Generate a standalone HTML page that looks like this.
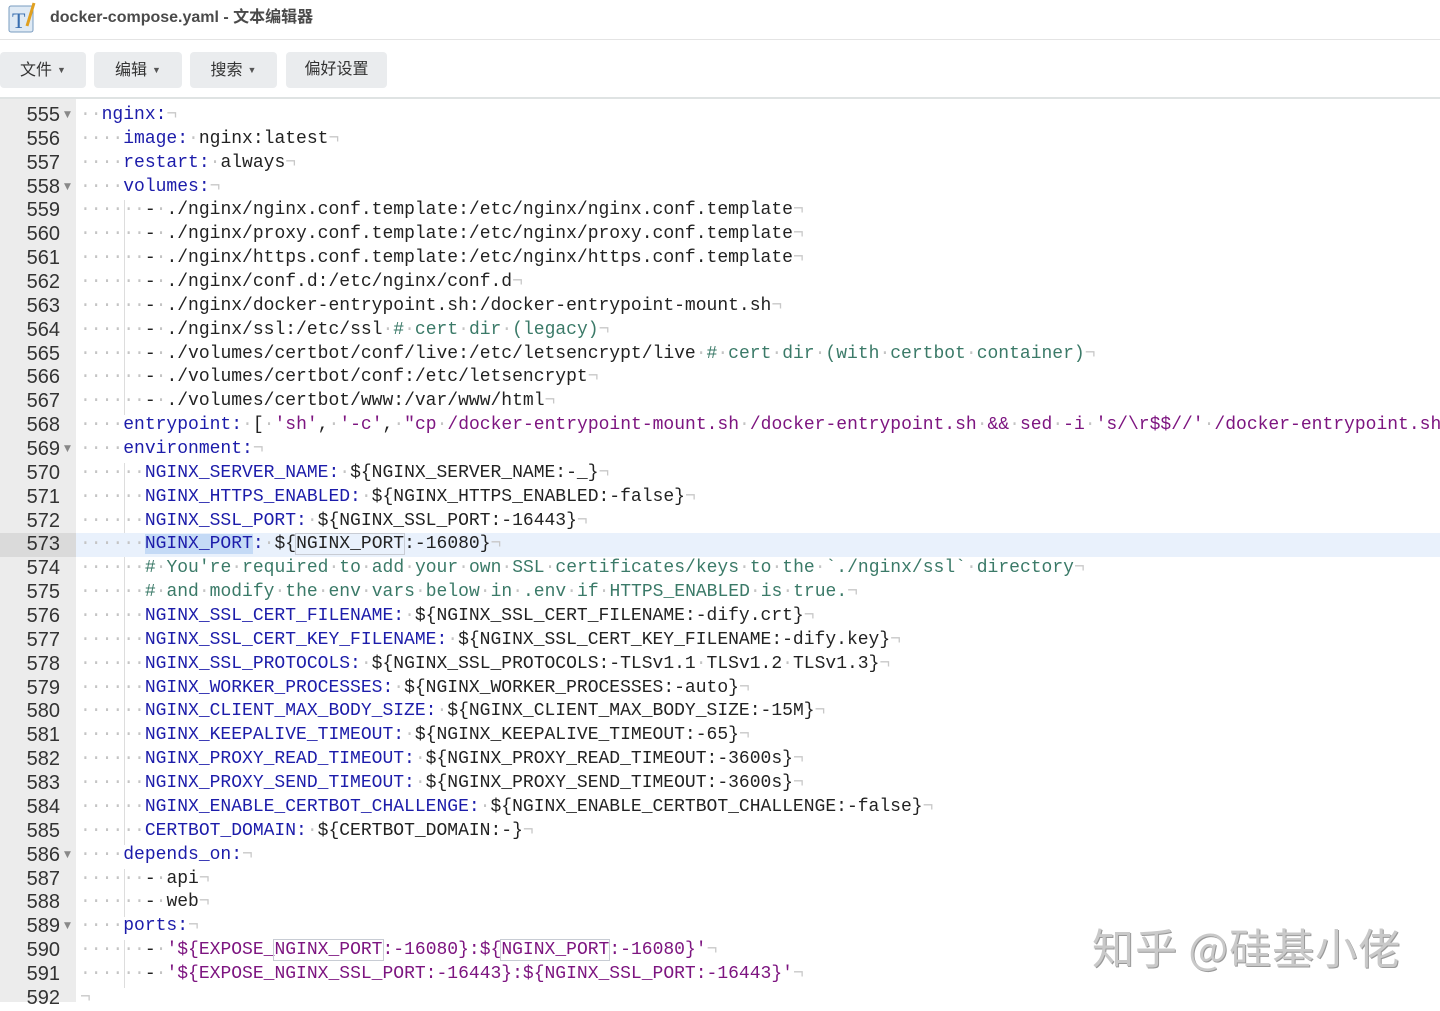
<!DOCTYPE html>
<html><head><meta charset="utf-8"><style>
*{margin:0;padding:0;box-sizing:border-box}
body{width:1440px;height:1002px;overflow:hidden;background:#fff;position:relative;font-family:"Liberation Sans","Noto Sans CJK SC",sans-serif}
.title{position:absolute;left:0;top:0;width:1440px;height:40px;border-bottom:1px solid #e4e4e4}
.title .t{position:absolute;left:50px;top:3px;font-size:16px;font-weight:bold;color:#4a4a4a}
.tb{position:absolute;top:52px;height:36px;background:#eaecee;border-radius:4px;font-size:16px;color:#333;text-align:center;line-height:36px}
.tb s{text-decoration:none;font-size:9px;vertical-align:2px;margin-left:5px;color:#555}
.sep{position:absolute;left:0;top:97px;width:1440px;height:2px;background:#dfe3e3}
.gut{position:absolute;left:0;top:99px;width:76px;height:903px;background:#ececec}
.code{position:absolute;left:0;top:104px;width:1440px;font-family:"Liberation Mono",monospace;font-size:18px}
.l{position:relative;height:23.86px;line-height:23.86px;white-space:pre}
.n{position:absolute;left:0;width:60px;text-align:right;font-family:"Liberation Sans",sans-serif;font-size:20px;color:#333}
.f{position:absolute;left:64px;font-size:9px;color:#888;font-family:"DejaVu Sans",sans-serif}
.c{position:absolute;left:80px;color:#222}
i{font-style:normal;color:#c4c4c4}
u{text-decoration:none;color:#c8c8c8}
.k{color:#1c1caa}.s{color:#7d1580}.m{color:#3b7a68}
.hl{background:#e9f1fc}
.hl .n{background:#dadada;width:76px;padding-right:16px}
.sel{background:#c4daf6}
.bx{outline:1px solid #c8ccd4}
.g{position:absolute;left:124px;width:1px;background:#ddd}
.wm{position:absolute;left:1092px;top:916px;font-size:42px;color:#c9c9c9;text-shadow:1px 1px 0 #999;letter-spacing:1px;font-family:"Noto Sans CJK SC",sans-serif}
</style></head><body>
<div class="title">
<svg style="position:absolute;left:8px;top:2px" width="30" height="32" viewBox="0 0 30 32"><rect x="1" y="4" width="24" height="26" rx="2" fill="#dfeaf5" stroke="#7a9cc0"/><text x="4" y="26" font-family="Liberation Serif" font-size="22" fill="#3a6fb0">T</text><path d="M26 1 L19 24" stroke="#e0a020" stroke-width="3"/></svg>
<div class="t">docker-compose.yaml - 文本编辑器</div></div>
<div class="tb" style="left:0;width:86px">文件<s>▼</s></div>
<div class="tb" style="left:94px;width:88px">编辑<s>▼</s></div>
<div class="tb" style="left:190px;width:87px">搜索<s>▼</s></div>
<div class="tb" style="left:286px;width:101px">偏好设置</div>
<div class="gut"></div>
<div class="g" style="top:200px;height:215px"></div>
<div class="g" style="top:463px;height:382px"></div>
<div class="g" style="top:869px;height:48px"></div>
<div class="g" style="top:940px;height:48px"></div>
<div class="code">
<div class="l"><span class="n">555</span><span class="f">▼</span><span class="c"><i>··</i><span class="k">nginx:</span><u>¬</u></span></div>
<div class="l"><span class="n">556</span><span class="c"><i>····</i><span class="k">image:</span><i>·</i>nginx:latest<u>¬</u></span></div>
<div class="l"><span class="n">557</span><span class="c"><i>····</i><span class="k">restart:</span><i>·</i>always<u>¬</u></span></div>
<div class="l"><span class="n">558</span><span class="f">▼</span><span class="c"><i>····</i><span class="k">volumes:</span><u>¬</u></span></div>
<div class="l"><span class="n">559</span><span class="c"><i>······</i>-<i>·</i>./nginx/nginx.conf.template:/etc/nginx/nginx.conf.template<u>¬</u></span></div>
<div class="l"><span class="n">560</span><span class="c"><i>······</i>-<i>·</i>./nginx/proxy.conf.template:/etc/nginx/proxy.conf.template<u>¬</u></span></div>
<div class="l"><span class="n">561</span><span class="c"><i>······</i>-<i>·</i>./nginx/https.conf.template:/etc/nginx/https.conf.template<u>¬</u></span></div>
<div class="l"><span class="n">562</span><span class="c"><i>······</i>-<i>·</i>./nginx/conf.d:/etc/nginx/conf.d<u>¬</u></span></div>
<div class="l"><span class="n">563</span><span class="c"><i>······</i>-<i>·</i>./nginx/docker-entrypoint.sh:/docker-entrypoint-mount.sh<u>¬</u></span></div>
<div class="l"><span class="n">564</span><span class="c"><i>······</i>-<i>·</i>./nginx/ssl:/etc/ssl<i>·</i><span class="m">#<i>·</i>cert<i>·</i>dir<i>·</i>(legacy)</span><u>¬</u></span></div>
<div class="l"><span class="n">565</span><span class="c"><i>······</i>-<i>·</i>./volumes/certbot/conf/live:/etc/letsencrypt/live<i>·</i><span class="m">#<i>·</i>cert<i>·</i>dir<i>·</i>(with<i>·</i>certbot<i>·</i>container)</span><u>¬</u></span></div>
<div class="l"><span class="n">566</span><span class="c"><i>······</i>-<i>·</i>./volumes/certbot/conf:/etc/letsencrypt<u>¬</u></span></div>
<div class="l"><span class="n">567</span><span class="c"><i>······</i>-<i>·</i>./volumes/certbot/www:/var/www/html<u>¬</u></span></div>
<div class="l"><span class="n">568</span><span class="c"><i>····</i><span class="k">entrypoint:</span><i>·</i>[<i>·</i><span class="s">'sh'</span>,<i>·</i><span class="s">'-c'</span>,<i>·</i><span class="s">"cp<i>·</i>/docker-entrypoint-mount.sh<i>·</i>/docker-entrypoint.sh<i>·</i>&amp;&amp;<i>·</i>sed<i>·</i>-i<i>·</i>'s/\r$$//'<i>·</i>/docker-entrypoint.sh<i>·</i>&amp;&amp;"</span></span></div>
<div class="l"><span class="n">569</span><span class="f">▼</span><span class="c"><i>····</i><span class="k">environment:</span><u>¬</u></span></div>
<div class="l"><span class="n">570</span><span class="c"><i>······</i><span class="k">NGINX_SERVER_NAME:</span><i>·</i>${NGINX_SERVER_NAME:-_}<u>¬</u></span></div>
<div class="l"><span class="n">571</span><span class="c"><i>······</i><span class="k">NGINX_HTTPS_ENABLED:</span><i>·</i>${NGINX_HTTPS_ENABLED:-false}<u>¬</u></span></div>
<div class="l"><span class="n">572</span><span class="c"><i>······</i><span class="k">NGINX_SSL_PORT:</span><i>·</i>${NGINX_SSL_PORT:-16443}<u>¬</u></span></div>
<div class="l hl"><span class="n">573</span><span class="c"><i>······</i><span class="k"><span class="sel">NGINX_PORT</span>:</span><i>·</i>${<span class="bx">NGINX_PORT</span>:-16080}<u>¬</u></span></div>
<div class="l"><span class="n">574</span><span class="c"><i>······</i><span class="m">#<i>·</i>You're<i>·</i>required<i>·</i>to<i>·</i>add<i>·</i>your<i>·</i>own<i>·</i>SSL<i>·</i>certificates/keys<i>·</i>to<i>·</i>the<i>·</i>`./nginx/ssl`<i>·</i>directory</span><u>¬</u></span></div>
<div class="l"><span class="n">575</span><span class="c"><i>······</i><span class="m">#<i>·</i>and<i>·</i>modify<i>·</i>the<i>·</i>env<i>·</i>vars<i>·</i>below<i>·</i>in<i>·</i>.env<i>·</i>if<i>·</i>HTTPS_ENABLED<i>·</i>is<i>·</i>true.</span><u>¬</u></span></div>
<div class="l"><span class="n">576</span><span class="c"><i>······</i><span class="k">NGINX_SSL_CERT_FILENAME:</span><i>·</i>${NGINX_SSL_CERT_FILENAME:-dify.crt}<u>¬</u></span></div>
<div class="l"><span class="n">577</span><span class="c"><i>······</i><span class="k">NGINX_SSL_CERT_KEY_FILENAME:</span><i>·</i>${NGINX_SSL_CERT_KEY_FILENAME:-dify.key}<u>¬</u></span></div>
<div class="l"><span class="n">578</span><span class="c"><i>······</i><span class="k">NGINX_SSL_PROTOCOLS:</span><i>·</i>${NGINX_SSL_PROTOCOLS:-TLSv1.1<i>·</i>TLSv1.2<i>·</i>TLSv1.3}<u>¬</u></span></div>
<div class="l"><span class="n">579</span><span class="c"><i>······</i><span class="k">NGINX_WORKER_PROCESSES:</span><i>·</i>${NGINX_WORKER_PROCESSES:-auto}<u>¬</u></span></div>
<div class="l"><span class="n">580</span><span class="c"><i>······</i><span class="k">NGINX_CLIENT_MAX_BODY_SIZE:</span><i>·</i>${NGINX_CLIENT_MAX_BODY_SIZE:-15M}<u>¬</u></span></div>
<div class="l"><span class="n">581</span><span class="c"><i>······</i><span class="k">NGINX_KEEPALIVE_TIMEOUT:</span><i>·</i>${NGINX_KEEPALIVE_TIMEOUT:-65}<u>¬</u></span></div>
<div class="l"><span class="n">582</span><span class="c"><i>······</i><span class="k">NGINX_PROXY_READ_TIMEOUT:</span><i>·</i>${NGINX_PROXY_READ_TIMEOUT:-3600s}<u>¬</u></span></div>
<div class="l"><span class="n">583</span><span class="c"><i>······</i><span class="k">NGINX_PROXY_SEND_TIMEOUT:</span><i>·</i>${NGINX_PROXY_SEND_TIMEOUT:-3600s}<u>¬</u></span></div>
<div class="l"><span class="n">584</span><span class="c"><i>······</i><span class="k">NGINX_ENABLE_CERTBOT_CHALLENGE:</span><i>·</i>${NGINX_ENABLE_CERTBOT_CHALLENGE:-false}<u>¬</u></span></div>
<div class="l"><span class="n">585</span><span class="c"><i>······</i><span class="k">CERTBOT_DOMAIN:</span><i>·</i>${CERTBOT_DOMAIN:-}<u>¬</u></span></div>
<div class="l"><span class="n">586</span><span class="f">▼</span><span class="c"><i>····</i><span class="k">depends_on:</span><u>¬</u></span></div>
<div class="l"><span class="n">587</span><span class="c"><i>······</i>-<i>·</i>api<u>¬</u></span></div>
<div class="l"><span class="n">588</span><span class="c"><i>······</i>-<i>·</i>web<u>¬</u></span></div>
<div class="l"><span class="n">589</span><span class="f">▼</span><span class="c"><i>····</i><span class="k">ports:</span><u>¬</u></span></div>
<div class="l"><span class="n">590</span><span class="c"><i>······</i>-<i>·</i><span class="s">'${EXPOSE_<span class="bx">NGINX_PORT</span>:-16080}:${<span class="bx">NGINX_PORT</span>:-16080}'</span><u>¬</u></span></div>
<div class="l"><span class="n">591</span><span class="c"><i>······</i>-<i>·</i><span class="s">'${EXPOSE_NGINX_SSL_PORT:-16443}:${NGINX_SSL_PORT:-16443}'</span><u>¬</u></span></div>
<div class="l"><span class="n">592</span><span class="c"><u>¬</u></span></div>
</div>
<div class="sep"></div>
<div class="wm">知乎 @硅基小佬</div>
</body></html>
